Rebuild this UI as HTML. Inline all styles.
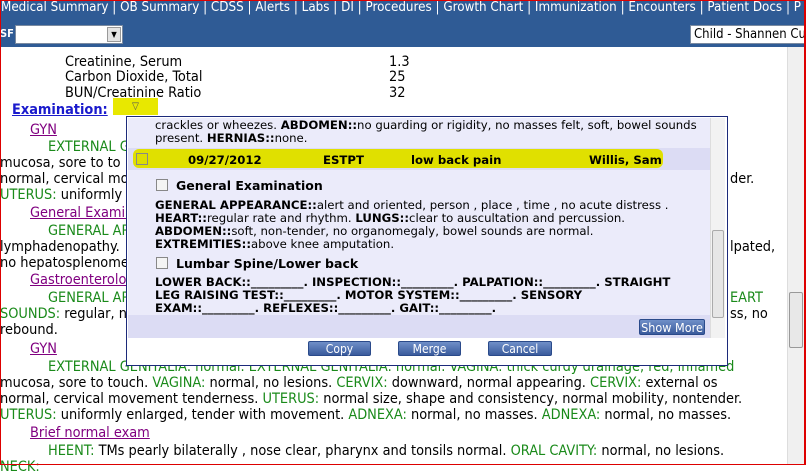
<!DOCTYPE html>
<html><head><style>
*{margin:0;padding:0;box-sizing:border-box}
body{width:806px;height:465px;overflow:hidden;position:relative;background:#fff;font-family:"DejaVu Sans Condensed","Liberation Sans",sans-serif;font-size:14.4px;color:#000}
.nav{position:absolute;left:0;top:0;width:806px;height:47px;background:#2f5b95}
.nav .links{position:absolute;left:1px;top:0px;color:#fff;font-size:13.3px;white-space:nowrap;font-family:"DejaVu Sans Condensed",sans-serif}
.sel{position:absolute;background:#fff;border:1px solid #7a8aa0;height:19px}
.t{position:absolute;white-space:nowrap;line-height:16px}
.g{color:#1a8a1a}
.p{color:#800080;text-decoration:underline}
.sb{position:absolute;background:#f0f0f0;border-left:1px solid #ddd}
.pop{position:absolute;left:126px;top:116px;width:602px;height:250px;background:#fff;border:1px solid #1c2a7a}
.inner{position:absolute;left:1px;top:1px;width:582px;height:220px;background:#ebebfa;overflow:hidden}
.inner .t{font-family:"DejaVu Sans",sans-serif;font-size:11.7px;line-height:13px}
.cb{position:absolute;width:12px;height:12px;border:1px solid #888;background:#f4f4f4}
.btn{position:absolute;height:15px;background:linear-gradient(#6f8fc8,#3a5b9c);color:#fff;font-size:12px;text-align:center;line-height:15px;border:1px solid #2a4a8a;border-radius:2px;font-family:"DejaVu Sans Condensed",sans-serif}
</style></head><body>
<div class="nav"><div class="links">Medical Summary | OB Summary | CDSS | Alerts | Labs | DI | Procedures | Growth Chart | Immunization | Encounters | Patient Docs | P</div>
<div class="t" style="left:0;top:26px;color:#fff;font-size:11px;font-weight:bold">SF</div>
<div class="sel" style="left:15px;top:25px;width:108px"><div style="position:absolute;right:1px;top:1px;width:14px;height:15px;background:#e4e4e4;border:1px solid #999;font-size:8px;text-align:center;line-height:14px">▼</div></div>
<div class="sel" style="left:690px;top:25px;width:120px;font-size:13px;padding-left:3px;line-height:17px;font-family:'DejaVu Sans Condensed',sans-serif">Child - Shannen Cu</div>
</div>
<div class="t" style="left:65px;top:54px;">Creatinine, Serum</div><div class="t" style="left:389px;top:54px">1.3</div>
<div class="t" style="left:65px;top:69px;">Carbon Dioxide, Total</div><div class="t" style="left:389px;top:69px">25</div>
<div class="t" style="left:65px;top:85px;">BUN/Creatinine Ratio</div><div class="t" style="left:389px;top:85px">32</div>
<div class="t" style="left:12px;top:102px;color:#1a1acc;font-weight:bold;text-decoration:underline">Examination:</div>
<div style="position:absolute;left:113px;top:98px;width:45px;height:17px;background:#e8e800;color:#555;font-size:10px;text-align:center;line-height:17px">▽</div>
<div class="t p" style="left:30px;top:122px">GYN</div>
<div class="t g" style="left:48px;top:139px">EXTERNAL GE</div>
<div class="t" style="left:0;top:155px">mucosa, sore to to</div>
<div class="t" style="left:0;top:171px">normal, cervical mo</div><div class="t" style="left:730px;top:171px">der.</div>
<div class="t" style="left:0;top:187px"><span class="g">UTERUS:</span> uniformly e</div>
<div class="t p" style="left:30px;top:205px">General Examin</div>
<div class="t g" style="left:48px;top:223px">GENERAL AP</div>
<div class="t" style="left:0;top:239px">lymphadenopathy.</div><div class="t" style="left:730px;top:239px">lpated,</div>
<div class="t" style="left:0;top:255px">no hepatosplenome</div>
<div class="t p" style="left:30px;top:272px">Gastroenterolo</div>
<div class="t g" style="left:48px;top:290px">GENERAL AP</div><div class="t g" style="left:730px;top:290px">EART</div>
<div class="t" style="left:0;top:306px"><span class="g">SOUNDS:</span> regular, n</div><div class="t" style="left:730px;top:306px">ss, no</div>
<div class="t" style="left:0;top:322px">rebound.</div>
<div class="t p" style="left:30px;top:341px">GYN</div>
<div class="t g" style="left:48px;top:359px">EXTERNAL GENITALIA: normal. EXTERNAL GENITALIA: normal. VAGINA: thick curdy drainage, red, inflamed</div>
<div class="t" style="left:0;top:375px">mucosa, sore to touch. <span class="g">VAGINA:</span> normal, no lesions. <span class="g">CERVIX:</span> downward, normal appearing. <span class="g">CERVIX:</span> external os</div>
<div class="t" style="left:0;top:391px">normal, cervical movement tenderness. <span class="g">UTERUS:</span> normal size, shape and consistency, normal mobility, nontender.</div>
<div class="t" style="left:0;top:407px"><span class="g">UTERUS:</span> uniformly enlarged, tender with movement. <span class="g">ADNEXA:</span> normal, no masses. <span class="g">ADNEXA:</span> normal, no masses.</div>
<div class="t p" style="left:30px;top:425px">Brief normal exam</div>
<div class="t" style="left:48px;top:443px"><span class="g">HEENT:</span> TMs pearly bilaterally , nose clear, pharynx and tonsils normal. <span class="g">ORAL CAVITY:</span> normal, no lesions.</div>
<div class="t" style="left:0;top:459px"><span class="g">NECK:</span></div>
<div class="sb" style="left:787px;top:47px;width:17px;height:418px"><div style="position:absolute;left:1px;top:245px;width:14px;height:56px;background:#e8e8e8;border:1px solid #999;border-radius:2px"></div></div>
<div class="pop">
<div class="inner">
<div class="t" style="left:27px;top:1px">crackles or wheezes. <b>ABDOMEN::</b>no guarding or rigidity, no masses felt, soft, bowel sounds</div>
<div class="t" style="left:27px;top:14px">present. <b>HERNIAS::</b>none.</div>
<div style="position:absolute;left:0;top:30px;width:582px;height:22px;background:#dcdcf4"></div>
<div style="position:absolute;left:5px;top:31px;width:530px;height:19px;background:#e0e000;border-radius:6px"></div>
<div class="cb" style="left:8px;top:35px;background:#dede00"></div>
<div class="t" style="left:60px;top:36px;font-weight:bold">09/27/2012</div>
<div class="t" style="left:195px;top:36px;font-weight:bold">ESTPT</div>
<div class="t" style="left:283px;top:36px;font-weight:bold">low back pain</div>
<div class="t" style="left:461px;top:36px;font-weight:bold">Willis, Sam</div>
<div class="cb" style="left:28px;top:61px"></div>
<div class="t" style="left:48px;top:61px;font-weight:bold;font-size:12.5px">General Examination</div>
<div class="t" style="left:27px;top:81px"><b>GENERAL APPEARANCE::</b>alert and oriented, person , place , time , no acute distress .</div>
<div class="t" style="left:27px;top:94px"><b>HEART::</b>regular rate and rhythm. <b>LUNGS::</b>clear to auscultation and percussion.</div>
<div class="t" style="left:27px;top:107px"><b>ABDOMEN::</b>soft, non-tender, no organomegaly, bowel sounds are normal.</div>
<div class="t" style="left:27px;top:120px"><b>EXTREMITIES::</b>above knee amputation.</div>
<div class="cb" style="left:28px;top:139px"></div>
<div class="t" style="left:48px;top:139px;font-weight:bold;font-size:12.5px">Lumbar Spine/Lower back</div>
<div class="t" style="left:27px;top:158px;font-weight:bold">LOWER BACK::_________. INSPECTION::_________. PALPATION::_________. STRAIGHT</div>
<div class="t" style="left:27px;top:171px;font-weight:bold">LEG RAISING TEST::_________. MOTOR SYSTEM::_________. SENSORY</div>
<div class="t" style="left:27px;top:184px;font-weight:bold">EXAM::_________. REFLEXES::_________. GAIT::_________.</div>
<div style="position:absolute;left:0;top:197px;width:582px;height:23px;background:#dcdcf4"></div>
<div class="btn" style="left:511px;top:201px;width:66px;height:16px;font-size:12.5px">Show More</div>
</div>
<div class="sb" style="left:583px;top:1px;width:15px;height:220px;background:#f2f2f2"><div style="position:absolute;left:1px;top:112px;width:12px;height:88px;background:#e6e6e6;border:1px solid #aaa;border-radius:2px"></div></div>
<div class="btn" style="left:181px;top:224px;width:63px">Copy</div>
<div class="btn" style="left:271px;top:224px;width:63px">Merge</div>
<div class="btn" style="left:361px;top:224px;width:64px">Cancel</div>
</div>
<div style="position:absolute;left:0;top:0;width:806px;height:465px;border:1px solid #d00;border-right-width:2px;pointer-events:none"></div>
</body></html>
